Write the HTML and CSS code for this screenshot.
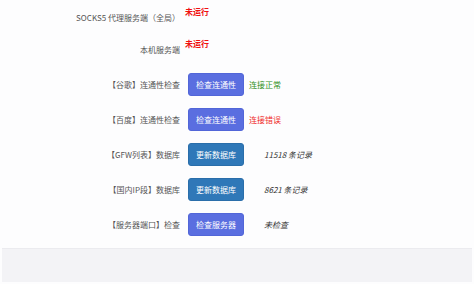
FILE: index.html
```html
<!DOCTYPE html>
<html lang="zh-CN">
<head>
    <meta charset="UTF-8">
    <meta name="viewport" content="width=device-width, initial-scale=1.0">
    <title>服务状态</title>
    <link rel="stylesheet" href="styles.css">
</head>
<body>

    <!-- Status form -->
    <div class="panel">
        <div class="row plain first">
            <label>SOCKS5 代理服务端（全局）</label>
            <span class="state off">未运行</span>
        </div>
        <div class="row plain second">
            <label>本机服务端</label>
            <span class="state off">未运行</span>
        </div>
        <div class="row">
            <label>【谷歌】连通性检查</label>
            <div class="cell">
                <button class="btn check">检查连通性</button>
                <span class="result ok">连接正常</span>
            </div>
        </div>
        <div class="row">
            <label>【百度】连通性检查</label>
            <div class="cell">
                <button class="btn check">检查连通性</button>
                <span class="result err">连接错误</span>
            </div>
        </div>
        <div class="row">
            <label>【GFW列表】数据库</label>
            <div class="cell">
                <button class="btn update">更新数据库</button>
                <span class="note">11518 条记录</span>
            </div>
        </div>
        <div class="row">
            <label>【国内IP段】数据库</label>
            <div class="cell">
                <button class="btn update">更新数据库</button>
                <span class="note">8621 条记录</span>
            </div>
        </div>
        <div class="row">
            <label>【服务器端口】检查</label>
            <div class="cell">
                <button class="btn check">检查服务器</button>
                <span class="note">未检查</span>
            </div>
        </div>
    </div>

    <div class="footer"></div>

</body>
</html>
```

FILE: styles.css
```css
body {
    margin: 0;
    background: #fdfdfe;
    font-family: "Noto Sans CJK SC", "Noto Sans", sans-serif;
    font-size: 8px;
    color: #555;
}
.panel {
    padding-top: 6px;
}
.row {
    display: grid;
    grid-template-columns: 180px 1fr;
    column-gap: 5px;
    align-items: center;
    height: 23px;
    margin-bottom: 12px;
}
.row label {
    text-align: right;
    line-height: 12px;
}
.row.plain {
    align-items: start;
    height: 20px;
}
.row.plain label {
    padding-top: 6px;
}
.row.first { margin-bottom: 12px; }
.row.second { margin-bottom: 15px; }
.state {
    line-height: 12px;
    font-weight: bold;
}
.off { color: #f01010; }
.cell {
    display: flex;
    align-items: center;
}
.btn {
    width: 56px;
    height: 23px;
    margin-left: 3px;
    padding: 0;
    border: 1px solid transparent;
    border-radius: 3px;
    color: white;
    font-family: inherit;
    font-size: 8px;
    cursor: pointer;
}
.check { background: #5a6ee0; border-color: #5266d8; }
.update { background: #2f78b8; border-color: #2a6eaa; }
.result { margin-left: 5px; }
.ok { color: #2f8f1a; }
.err { color: #f02828; }
.note {
    margin-left: 20px;
    font-style: italic;
    color: #333;
}
.footer {
    margin: 3px 2px 0;
    height: 33px;
    background: #f3f3f6;
    border-top: 1px solid #ebebef;
}
```
